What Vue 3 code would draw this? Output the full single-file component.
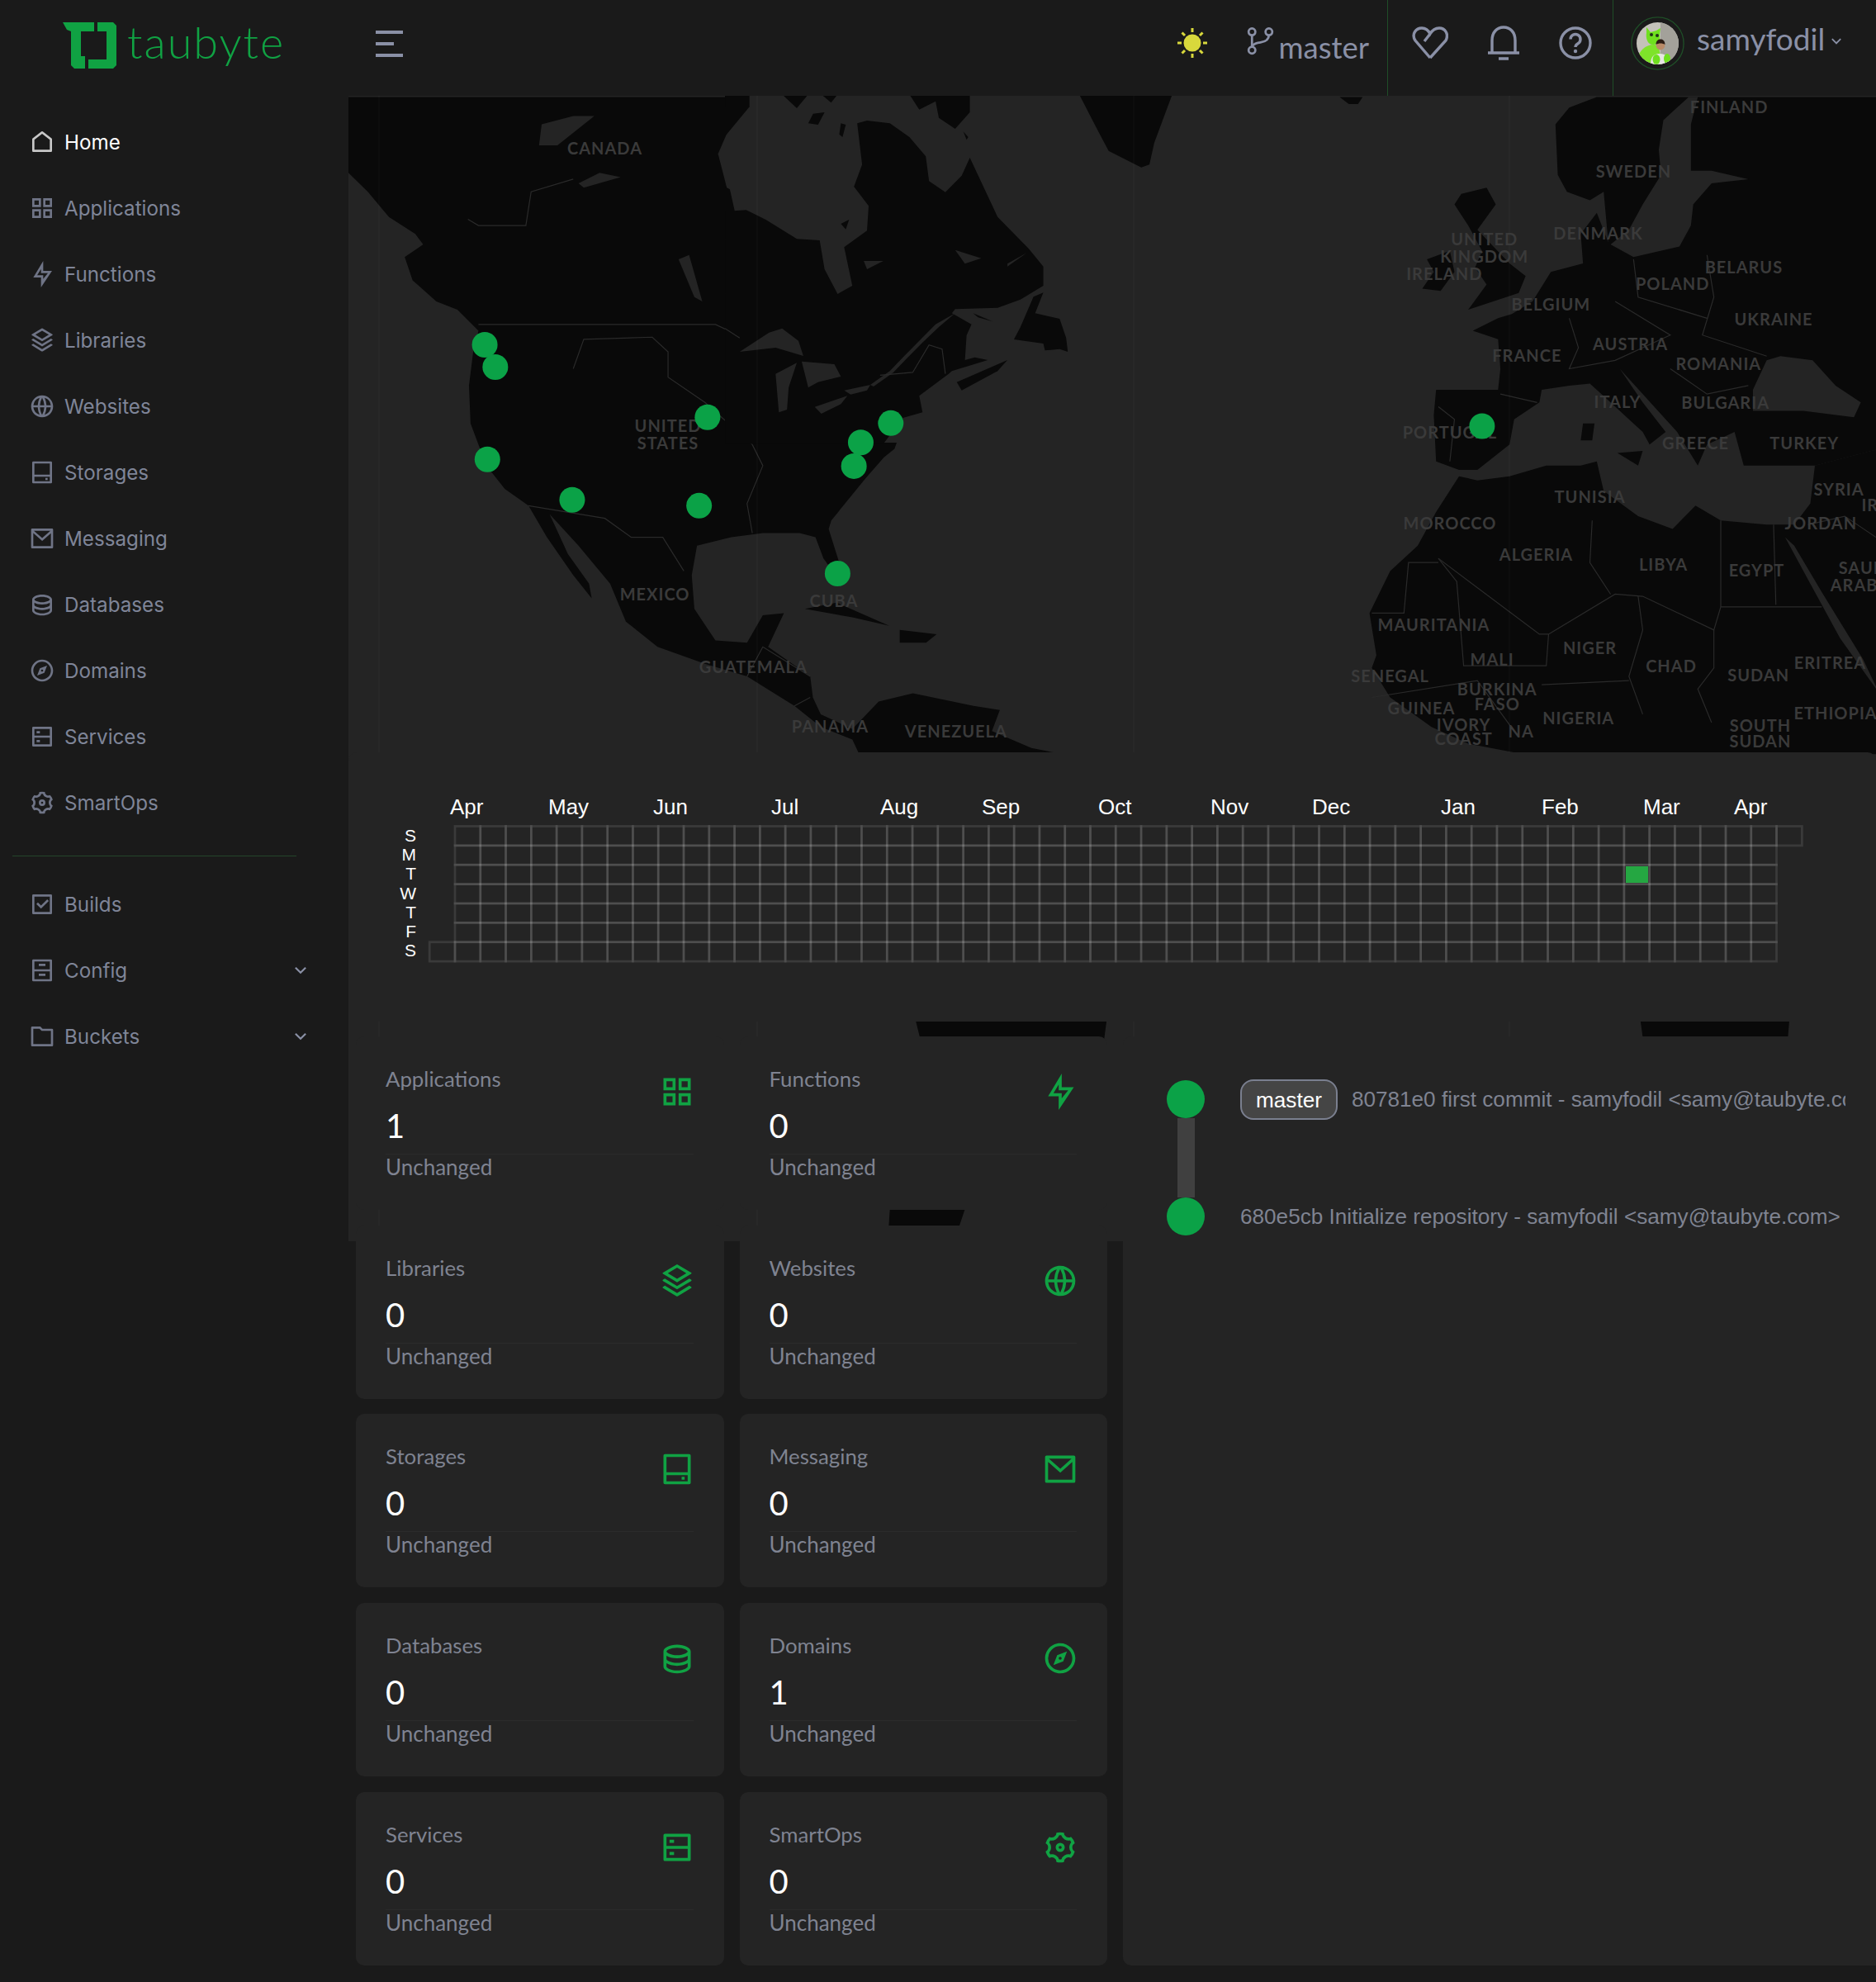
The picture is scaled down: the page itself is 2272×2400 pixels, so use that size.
<template>
  <div class="app">
    <header class="topbar">
      <div class="brand">
        <svg class="logo" viewBox="0 0 65 56" width="65" height="56">
          <path d="M0 0H38V11H22V41H27V56H14L10 52V11L5 9Z" fill="#10a243" />
          <path d="M42 0H61L65 4V52L61 56H31V45H53V11H42Z" fill="#10a243" />
        </svg>
        <span class="brand-name">taubyte</span>
      </div>
      <button class="burger"><i></i><i class="short"></i><i></i></button>

      <div class="top-right">
        <div class="top-group first">
          <svg class="sun" viewBox="0 0 40 40" width="40" height="40">
            <circle cx="20" cy="20" r="10.5" fill="#d8d83c" />
            <g stroke="#d8d83c" stroke-width="3">
              <path d="M20 2v5M20 33v5M2 20h5M33 20h5M7.5 7.5l3.5 3.5M29 29l3.5 3.5M7.5 32.5L11 29M29 11l3.5-3.5" />
            </g>
          </svg>
          <svg class="branch" viewBox="0 0 24 24" width="41" height="41">
            <g fill="none" stroke="#8a90a6" stroke-width="1.6">
              <circle cx="6" cy="5" r="2.4" />
              <circle cx="18" cy="5" r="2.4" />
              <circle cx="6" cy="18" r="2.4" />
              <path d="M6 7.4v8.2M18 7.4c0 3.6-3 4.6-6 5.1s-5.4 1-6 3.1" />
            </g>
          </svg>
          <span class="branch-name">master</span>
        </div>
        <div class="top-group icons">
          <svg viewBox="0 0 44 40" width="44" height="40">
            <path d="M22 38L4 17C-1 9 5 2 12 2c5 0 8 3 10 7 3-5 7-7 11-7 7 0 12 7 8 15L22 38M22 9l-7 9" fill="none" stroke="#8a90a6" stroke-width="3.4" />
          </svg>
          <svg viewBox="0 0 40 42" width="40" height="42">
            <path d="M6 33V18C6 8 12 2 20 2s14 6 14 16v15M1 33h38M14 40h12" fill="none" stroke="#8a90a6" stroke-width="3.4" />
          </svg>
          <svg viewBox="0 0 40 40" width="40" height="40">
            <circle cx="20" cy="20" r="18" fill="none" stroke="#8a90a6" stroke-width="3.4" />
            <path d="M14 15.5a6 6 0 1 1 9 5.2c-2 1.2-3 2.2-3 4.4" fill="none" stroke="#8a90a6" stroke-width="3.4" />
            <circle cx="20" cy="30" r="2.2" fill="#8a90a6" />
          </svg>
        </div>
        <div class="top-group user">
          <svg class="avatar" viewBox="0 0 65 65" width="65" height="65">
            <defs>
              <clipPath id="avatar-clip"><circle cx="32.5" cy="32.5" r="25.5" /></clipPath>
            </defs>
            <circle cx="32.5" cy="32.5" r="31.6" fill="none" stroke="#1f4d27" stroke-width="1.4" />
            <g clip-path="url(#avatar-clip)">
              <rect width="65" height="65" fill="#c4c2ba" />
              <rect x="36" width="29" height="65" fill="#a3a19a" />
              <path d="M19 13l5 6 7-2 5-3-1 8c1 6-1 12-8 12s-9-8-8-14z" fill="#6fe01f" />
              <circle cx="25" cy="22" r="2" fill="#20301a" />
              <circle cx="32" cy="23" r="2" fill="#20301a" />
              <path d="M6 58c2-14 10-24 22-24 6 0 8 6 8 24z" fill="#7ee32a" />
              <path d="M24 58c0-8 3-13 11-13s13 5 13 13z" fill="#e6e6e2" />
              <circle cx="36" cy="35" r="5.4" fill="#b98a68" />
              <path d="M30.500 34c0-5 3-6.500 5.500-6.500s5.500 1.500 5.500 6.500c-3-2-8-2-11 0z" fill="#2b1c14" />
              <ellipse cx="31" cy="52" rx="4.500" ry="6" fill="#6fe01f" />
              <ellipse cx="44" cy="51" rx="4" ry="6" fill="#6fe01f" />
            </g>
          </svg>
          <span class="user-name">samyfodil</span>
          <svg class="user-chev" viewBox="0 0 24 24" width="22" height="22"><path :d="chevron" /></svg>
        </div>
      </div>
    </header>

    <div class="layout">
      <nav class="sidebar">
        <a v-for="item in menu" :key="item.label" class="side-item" :class="{ active: item.label === 'Home' }">
          <svg viewBox="0 0 24 24" width="32" height="32"><path :d="icons[item.icon]" fill-rule="evenodd" /></svg>
          <span>{{ item.label }}</span>
        </a>
        <div class="side-rule"></div>
        <a v-for="item in lowerMenu" :key="item.label" class="side-item">
          <svg viewBox="0 0 24 24" width="32" height="32"><path :d="icons[item.icon]" fill-rule="evenodd" /></svg>
          <span>{{ item.label }}</span>
          <svg v-if="item.more" class="side-chev" viewBox="0 0 24 24" width="26" height="26"><path :d="chevron" /></svg>
        </a>
      </nav>

      <main class="main">
        <!-- map sits behind everything, cards and chart are laid over it -->
        <svg class="map" viewBox="422 116 1850 1387" width="1850" height="1387">
          <g transform="translate(420 120) scale(0.6378 0.5102)" fill="#090909">
            <path d="M-5 -5L1250 -5L1190 130L1270 310L1325 410L1320 440L1200 500L1110 565L1120 590L1180 590L1250 610L1180 680L1150 680L1090 710L1060 760L1040 830L1020 850L985 900L920 1000L915 1020L935 1100L925 1125L905 1090L890 1040L860 1030L790 1030L730 1040L665 1060L655 1130L660 1210L700 1285L760 1290L790 1225L830 1220L800 1300L880 1370L885 1420L900 1460L960 1495L1010 1430L1075 1410L1190 1440L1240 1450L1225 1500L1300 1540L1360 1555L975 1560L960 1520L900 1490L850 1440L760 1370L680 1340L590 1300L530 1240L500 1150L440 1060L385 985L420 1080L460 1150L465 1185L430 1130L380 1040L345 965L300 925L265 870L235 770L232 680L240 600L250 550L210 500L170 480L125 430L110 375L145 345L130 320L80 280L40 220L-5 165Z" />
            <path d="M870 1210L930 1195L1030 1250L960 1230Z" />
            <path d="M1050 1260L1120 1270L1100 1290L1050 1290Z" />
            <g fill="#242424">
              <path d="M721 84L705 130L721 208L735 84Z" />
              <path d="M630 380L650 370L675 480L660 470Z" />
              <path d="M370 60L430 40L470 40L400 110L365 110Z" />
              <path d="M440 200L480 175L520 185L450 210Z" />
            </g>
            <g fill="none" stroke="#2a2a2a" stroke-width="1.2">
              <path vector-effect="non-scaling-stroke" d="M250 535L700 535L760 570" />
              <path vector-effect="non-scaling-stroke" d="M345 965L490 995L540 1040L600 1040L640 1120" />
              <path vector-effect="non-scaling-stroke" d="M230 285L250 300L340 300L350 220L430 190" />
              <path vector-effect="non-scaling-stroke" d="M430 640L450 570L580 565L610 600L610 660L680 720L770 820L790 870L760 960L770 1030" />
              <path vector-effect="non-scaling-stroke" d="M760 1370L790 1300L880 1370M850 1440L880 1420" />
            </g>
          </g>

          <!-- north east of America is redrawn on its own, it is too detailed for the coarse outline -->
          <rect x="880" y="116" width="620" height="420" fill="#242424" />
          <g transform="translate(880 116) scale(0.3954 0.3333)" fill="#090909">
            <path d="M-5 420L60 415L120 450L215 520L285 525L300 630L340 720L385 690L360 550L430 490L435 400L390 330L415 250L400 100L430 90L500 100L560 150L610 220L620 310L670 350L720 290L745 225L830 440L925 555L970 620L970 690L900 740L830 770L700 775L690 790L750 830L735 870L730 960L760 950L800 960L690 1000L680 1010L590 1090L600 1150L540 1170L480 1265L-5 1265Z" />
            <path d="M-5 -5L70 -5L70 40L0 140L-5 140Z" />
            <path d="M-5 330L10 340L25 420L-5 420Z" />
            <path d="M170 -5L250 -5L215 45Z" />
            <path d="M290 -5L340 -5L320 25Z" />
            <path d="M250 100L265 65L300 60L280 105Z" />
            <path d="M345 140L350 100L365 105L355 150Z" />
            <path d="M560 -5L745 -5L745 60L700 120L650 80L640 20L590 50Z" />
            <path d="M725 130L740 150L735 160Z" />
            <path d="M1080 -5L1365 -5L1310 170L1295 250L1270 260L1170 200L1130 110Z" />
            <path d="M880 885L900 840L940 730L970 715L945 790L1020 810L1040 880L1045 930L1020 920L975 925L970 900Z" />
            <path d="M705 1040L860 960L830 1000L720 1070Z" />
            <g fill="#242424">
              <path d="M40 930L130 860L170 845L220 890L235 945L150 915Z" />
              <path d="M150 1010L215 970L190 1060L185 1140L160 1150Z" />
              <path d="M230 965L330 975L350 1020L280 1040L250 1060Z" />
              <path d="M270 1130L370 1090L350 1120L290 1155Z" />
              <path d="M360 1070L440 1050L430 1070L380 1085Z" />
              <path d="M420 600L480 600L430 630Z" />
              <path d="M700 560L780 590L730 610Z" />
              <path d="M860 610L920 570L860 620Z" />
              <path d="M700 790L640 830L590 890L540 950L500 1000L440 1050L450 1056L510 1006L550 956L600 896L650 840Z" />
            </g>
            <path d="M755 790L815 820L770 805Z" />
            <path d="M350 465L375 450L365 485Z" />
            <g fill="none" stroke="#2a2a2a" stroke-width="1.2">
              <path vector-effect="non-scaling-stroke" d="M-5 845L40 880" />
              <path vector-effect="non-scaling-stroke" d="M470 1015L570 1005L620 905L660 920L670 1010" />
            </g>
          </g>

          <g transform="translate(1400 120) scale(0.5561 0.5102)" fill="#090909">
            <path d="M870 60L900 20L960 -5L1575 -5L1575 830L1435 870L1280 870L1260 790L1240 800L1200 820L1180 870L1135 790L1010 640L1060 720L1110 790L1075 820L1060 790L990 720L945 675L900 680L840 690L835 720L780 760L770 820L700 880L660 880L610 860L605 750L610 690L745 690L750 640L745 570L690 550L745 520L775 510L820 480L860 410L930 390L925 320L960 270L985 340L975 220L945 240L895 220L875 180Z" />
            <path d="M660 895L700 905L770 895L850 870L925 870L960 860L975 930L1050 990L1125 1020L1175 965L1230 1000L1330 1010L1390 1010L1425 960L1435 870L1575 830L1575 1555L800 1555L680 1530L600 1490L510 1420L470 1350L480 1320L465 1220L510 1120L570 1060L610 980Z" />
            <path d="M650 250L665 225L720 210L740 250L700 310L770 390L805 420L790 460L680 500L720 440L695 400L710 360L680 300Z" />
            <path d="M590 380L640 360L650 410L620 455L580 450L605 410Z" />
            <path d="M930 770L955 770L950 810L925 810Z" />
            <path d="M1005 840L1060 835L1050 870Z" />
            <path d="M400 -5L450 -5L440 12L420 12Z" />
            <g fill="#242424">
              <path d="M1160 -5L1105 50L1095 120L1100 180L1060 250L1030 310L990 345L1040 375L1140 350L1165 300L1170 250L1210 200L1290 190L1210 170L1165 170L1165 60L1180 -5Z" />
              <path d="M1300 690L1330 620L1360 610L1430 620L1480 680L1535 720L1520 755L1410 740L1300 740Z" />
              <path d="M1370 1040L1420 1140L1490 1280L1575 1410L1540 1330L1450 1170L1390 1060Z" />
            </g>
            <g fill="none" stroke="#2a2a2a" stroke-width="1.2">
              <path vector-effect="non-scaling-stroke" d="M615 1090L835 1270L855 1270L1000 1175L1060 1180L1215 1260L1230 1205L1450 1205" />
              <path vector-effect="non-scaling-stroke" d="M1230 1000L1230 1205M950 1000L945 1100L990 1175" />
              <path vector-effect="non-scaling-stroke" d="M855 1270L850 1345L670 1345L655 1145L615 1090M470 1220L540 1220L550 1100L615 1100" />
              <path vector-effect="non-scaling-stroke" d="M1215 1260L1215 1350L1180 1400L1210 1480M1050 1180L1060 1260L1030 1370L1060 1460" />
              <path vector-effect="non-scaling-stroke" d="M1040 380L1050 470L1200 520M1200 370L1215 470L1190 560L1330 610" />
              <path vector-effect="non-scaling-stroke" d="M900 520L920 590L900 640L1000 620L1120 560L1000 480M750 700L830 720M615 730L650 760L640 860" />
              <path vector-effect="non-scaling-stroke" d="M1120 640L1200 700L1290 680M840 1390L1030 1380M470 1420L700 1380L780 1500" />
              <path vector-effect="non-scaling-stroke" d="M1345 1010L1350 1200M1420 1010L1500 990L1568 1040" />
            </g>
          </g>

          <path d="M1100 1200L1345 1200L1337 1260L1115 1260Z" fill="#090909" />
          <path d="M1982 1200L2170 1200L2165 1260L1990 1260Z" fill="#090909" />
          <path d="M1078 1460L1170 1460L1160 1490L1076 1490Z" fill="#090909" />

          <line v-for="x in seams" :key="x" :x1="x" :x2="x" y1="116" y2="1503" stroke="#fff" stroke-opacity="0.04" />

          <text v-for="l in labels" :key="l.t + l.x" :x="l.x" :y="l.y" class="map-label">{{ l.t }}</text>
          <circle v-for="p in pins" :key="p.x" :cx="p.x" :cy="p.y" r="15.5" fill="#0ba247" />
        </svg>

        <div class="content">
          <section class="chart">
            <svg viewBox="422 911 1850 326" width="1850" height="326">
              <text v-for="m in months" :key="m.t + m.x" :x="m.x" y="986" class="chart-text">{{ m.t }}</text>
              <text v-for="d in days" :key="d.y" x="504" :y="d.y" class="chart-day">{{ d.t }}</text>
              <rect v-for="c in cells" :key="c.k" :x="c.x" :y="c.y" width="30.78" height="23.37" fill="none" stroke="#fff" stroke-opacity="0.1" stroke-width="2.8" />
              <rect x="1969" y="1049" width="27" height="20" fill="#25a742" />
            </svg>
          </section>

          <section class="lower">
            <div class="stats">
              <div v-for="s in stats" :key="s.title" class="stat">
                <div class="stat-top">
                  <div>
                    <div class="stat-title">{{ s.title }}</div>
                    <div class="stat-value">{{ s.value }}</div>
                  </div>
                  <svg viewBox="0 0 24 24" width="44" height="44"><path :d="icons[s.icon]" fill-rule="evenodd" /></svg>
                </div>
                <div class="stat-note">Unchanged</div>
              </div>
            </div>

            <div class="commits">
              <div class="commit">
                <span class="dot"></span>
                <span class="tag">master</span>
                <span class="commit-text">80781e0 first commit - samyfodil &lt;samy@taubyte.com&gt;</span>
              </div>
              <div class="link"></div>
              <div class="commit">
                <span class="dot"></span>
                <span class="commit-text">680e5cb Initialize repository - samyfodil &lt;samy@taubyte.com&gt;</span>
              </div>
            </div>
          </section>
        </div>
      </main>
    </div>
  </div>
</template>

<script setup>
const chevron = "M12 13.172l4.95-4.95 1.414 1.414L12 16 5.636 9.636 7.05 8.222z";

const icons = {
  home: "M21 20a1 1 0 0 1-1 1H4a1 1 0 0 1-1-1V9.49a1 1 0 0 1 .386-.79l8-6.222a1 1 0 0 1 1.228 0l8 6.222a1 1 0 0 1 .386.79V20zm-2-1V9.978l-7-5.444-7 5.444V19h14z",
  apps: "M3 3h8v8H3V3zm0 10h8v8H3v-8zM13 3h8v8h-8V3zm0 10h8v8h-8v-8zm2-8v4h4V5h-4zm0 10v4h4v-4h-4zM5 5v4h4V5H5zm0 10v4h4v-4H5z",
  bolt: "M13 9h8L11 24v-9H4l9-15v9zm-2 2V7.237L7.532 13H13v3.394L17.263 11H11z",
  stack:
    "M20.083 15.2l1.202.721a.5.5 0 0 1 0 .858l-8.77 5.262a1 1 0 0 1-1.03 0l-8.77-5.262a.5.5 0 0 1 0-.858l1.202-.721L12 20.05l8.083-4.85zm0-4.7l1.202.721a.5.5 0 0 1 0 .858L12 17.65l-9.285-5.571a.5.5 0 0 1 0-.858l1.202-.721L12 15.35l8.083-4.85zm-7.569-9.191l8.771 5.262a.5.5 0 0 1 0 .858L12 13 2.715 7.429a.5.5 0 0 1 0-.858l8.77-5.262a1 1 0 0 1 1.03 0zM12 3.332L5.887 7 12 10.668 18.113 7 12 3.332z",
  globe:
    "M12 22C6.477 22 2 17.523 2 12S6.477 2 12 2s10 4.477 10 10-4.477 10-10 10zm-2.29-2.333A17.9 17.9 0 0 1 8.027 13H4.062a8.008 8.008 0 0 0 5.648 6.667zM10.03 13c.151 2.439.848 4.73 1.97 6.752A15.905 15.905 0 0 0 13.97 13h-3.94zm9.908 0h-3.965a17.9 17.9 0 0 1-1.683 6.667A8.008 8.008 0 0 0 19.938 13zM4.062 11h3.965A17.9 17.9 0 0 1 9.71 4.333 8.008 8.008 0 0 0 4.062 11zm5.969 0h3.938A15.905 15.905 0 0 0 12 4.248 15.905 15.905 0 0 0 10.03 11zm4.259-6.667A17.9 17.9 0 0 1 15.973 11h3.965a8.008 8.008 0 0 0-5.648-6.667z",
  drive: "M5 14h14V4H5v10zm0 2v4h14v-4H5zM4 2h16a1 1 0 0 1 1 1v18a1 1 0 0 1-1 1H4a1 1 0 0 1-1-1V3a1 1 0 0 1 1-1zm11 15h2v2h-2v-2z",
  mail: "M3 3h18a1 1 0 0 1 1 1v16a1 1 0 0 1-1 1H3a1 1 0 0 1-1-1V4a1 1 0 0 1 1-1zm17 4.238l-7.928 7.1L4 7.216V19h16V7.238zM4.511 5l7.55 6.662L19.502 5H4.511z",
  database:
    "M5 12.5c0 .313.461.858 1.53 1.393C7.914 14.585 9.877 15 12 15c2.123 0 4.086-.415 5.47-1.107 1.069-.535 1.53-1.08 1.53-1.393v-2.171C17.35 11.349 14.827 12 12 12s-5.35-.652-7-1.671V12.5zm14 2.829C17.35 16.349 14.827 17 12 17s-5.35-.652-7-1.671V17.5c0 .313.461.858 1.53 1.393C7.914 19.585 9.877 20 12 20c2.123 0 4.086-.415 5.47-1.107 1.069-.535 1.53-1.08 1.53-1.393v-2.171zM3 17.5v-10C3 5.015 7.03 3 12 3s9 2.015 9 4.5v10c0 2.485-4.03 4.5-9 4.5s-9-2.015-9-4.5zm9-7.5c2.123 0 4.086-.415 5.47-1.107C18.539 8.358 19 7.813 19 7.5c0-.313-.461-.858-1.53-1.393C16.086 5.415 14.123 5 12 5c-2.123 0-4.086.415-5.47 1.107C5.461 6.642 5 7.187 5 7.5c0 .313.461.858 1.53 1.393C7.914 9.585 9.877 10 12 10z",
  compass:
    "M12 22C6.477 22 2 17.523 2 12S6.477 2 12 2s10 4.477 10 10-4.477 10-10 10zm0-2a8 8 0 1 0 0-16 8 8 0 0 0 0 16zm4.5-12.5L14 14l-6.5 2.5L10 10l6.5-2.5zM12 13a1 1 0 1 0 0-2 1 1 0 0 0 0 2z",
  server: "M5 11h14V5H5v6zm16-7v16a1 1 0 0 1-1 1H4a1 1 0 0 1-1-1V4a1 1 0 0 1 1-1h16a1 1 0 0 1 1 1zm-2 9H5v6h14v-6zM7 15h3v2H7v-2zm0-8h3v2H7V7z",
  gear: "M3.34 17a10.018 10.018 0 0 1-.978-2.326 3 3 0 0 0 .002-5.347A9.99 9.99 0 0 1 4.865 4.99a3 3 0 0 0 4.631-2.674 9.99 9.99 0 0 1 5.007.002 3 3 0 0 0 4.632 2.672c.579.59 1.093 1.261 1.525 2.01.433.749.757 1.53.978 2.326a3 3 0 0 0-.002 5.347 9.99 9.99 0 0 1-2.501 4.337 3 3 0 0 0-4.631 2.674 9.99 9.99 0 0 1-5.007-.002 3 3 0 0 0-4.632-2.672A10.018 10.018 0 0 1 3.34 17zm5.66.196a4.993 4.993 0 0 1 2.25 2.77c.499.047 1 .048 1.499.001A4.993 4.993 0 0 1 15 17.197a4.993 4.993 0 0 1 3.525-.565c.29-.408.54-.843.748-1.298A4.993 4.993 0 0 1 18 12c0-1.26.47-2.437 1.273-3.334a8.126 8.126 0 0 0-.75-1.298A4.993 4.993 0 0 1 15 6.804a4.993 4.993 0 0 1-2.25-2.77c-.499-.047-1-.048-1.499-.001A4.993 4.993 0 0 1 9 6.803a4.993 4.993 0 0 1-3.525.565 7.99 7.99 0 0 0-.748 1.298A4.993 4.993 0 0 1 6 12c0 1.26-.47 2.437-1.273 3.334a8.126 8.126 0 0 0 .75 1.298A4.993 4.993 0 0 1 9 17.196zM12 15a3 3 0 1 1 0-6 3 3 0 0 1 0 6zm0-2a1 1 0 1 0 0-2 1 1 0 0 0 0 2z",
  check: "M4 3h16a1 1 0 0 1 1 1v16a1 1 0 0 1-1 1H4a1 1 0 0 1-1-1V4a1 1 0 0 1 1-1zm1 2v14h14V5H5zm6.003 11L6.76 11.757l1.414-1.414 2.829 2.829 5.656-5.657 1.415 1.414L11.003 16z",
  drawer: "M3 2.992C3 2.444 3.445 2 3.993 2h16.014a1 1 0 0 1 .993.992v18.016a.993.993 0 0 1-.993.992H3.993A1 1 0 0 1 3 21.008V2.992zM19 11V4H5v7h14zm0 2H5v7h14v-7zM9 6h6v2H9V6zm0 9h6v2H9v-2z",
  folder: "M4 5v14h16V7h-8.414l-2-2H4zm8.414 0H21a1 1 0 0 1 1 1v14a1 1 0 0 1-1 1H3a1 1 0 0 1-1-1V4a1 1 0 0 1 1-1h7.414l2 2z",
};

const menu = [
  { label: "Home", icon: "home" },
  { label: "Applications", icon: "apps" },
  { label: "Functions", icon: "bolt" },
  { label: "Libraries", icon: "stack" },
  { label: "Websites", icon: "globe" },
  { label: "Storages", icon: "drive" },
  { label: "Messaging", icon: "mail" },
  { label: "Databases", icon: "database" },
  { label: "Domains", icon: "compass" },
  { label: "Services", icon: "server" },
  { label: "SmartOps", icon: "gear" },
];

const lowerMenu = [
  { label: "Builds", icon: "check" },
  { label: "Config", icon: "drawer", more: true },
  { label: "Buckets", icon: "folder", more: true },
];

const stats = [
  { title: "Applications", value: 1, icon: "apps" },
  { title: "Functions", value: 0, icon: "bolt" },
  { title: "Libraries", value: 0, icon: "stack" },
  { title: "Websites", value: 0, icon: "globe" },
  { title: "Storages", value: 0, icon: "drive" },
  { title: "Messaging", value: 0, icon: "mail" },
  { title: "Databases", value: 0, icon: "database" },
  { title: "Domains", value: 1, icon: "compass" },
  { title: "Services", value: 0, icon: "server" },
  { title: "SmartOps", value: 0, icon: "gear" },
];

// map positions were read off the screenshot, so the two areas have their own scale
const west = (x, y) => ({ x: 420 + x / 1.568, y: 120 + y / 1.96 });
const east = (x, y) => ({ x: 1400 + x / 1.798, y: 120 + y / 1.96 });

const seams = [459, 917, 1373, 1828];

const pins = [
  west(262, 583),
  west(282, 636),
  west(685, 755),
  west(1033, 769),
  west(976, 815),
  west(963, 871),
  west(267, 855),
  west(428, 951),
  west(669, 965),
  west(932, 1126),
  east(710, 776),
];

const westLabels = [
  ["CANADA", 490, 115],
  ["UNITED", 610, 775],
  ["STATES", 610, 815],
  ["MEXICO", 585, 1175],
  ["CUBA", 925, 1190],
  ["GUATEMALA", 772, 1347],
  ["PANAMA", 918, 1488],
  ["VENEZUELA", 1157, 1500],
];

const eastLabels = [
  ["FINLAND", 1248, 18],
  ["SWEDEN", 1040, 170],
  ["UNITED", 715, 332],
  ["KINGDOM", 715, 372],
  ["DENMARK", 963, 317],
  ["IRELAND", 628, 413],
  ["BELARUS", 1280, 397],
  ["POLAND", 1125, 437],
  ["BELGIUM", 860, 487],
  ["UKRAINE", 1345, 522],
  ["AUSTRIA", 1033, 580],
  ["FRANCE", 808, 608],
  ["ROMANIA", 1225, 628],
  ["ITALY", 1005, 717],
  ["BULGARIA", 1240, 720],
  ["PORTUGAL", 640, 790],
  ["TURKEY", 1412, 815],
  ["GREECE", 1175, 815],
  ["SYRIA", 1487, 925],
  ["IR", 1555, 962],
  ["TUNISIA", 945, 943],
  ["JORDAN", 1448, 1006],
  ["MOROCCO", 640, 1006],
  ["ALGERIA", 828, 1079],
  ["LIBYA", 1105, 1104],
  ["EGYPT", 1308, 1118],
  ["SAUDI", 1545, 1112],
  ["ARABIA", 1540, 1152],
  ["MAURITANIA", 605, 1247],
  ["MALI", 732, 1328],
  ["NIGER", 945, 1301],
  ["CHAD", 1122, 1345],
  ["SUDAN", 1312, 1366],
  ["ERITREA", 1468, 1336],
  ["SENEGAL", 510, 1369],
  ["BURKINA", 743, 1400],
  ["FASO", 743, 1434],
  ["GUINEA", 578, 1445],
  ["IVORY", 670, 1484],
  ["COAST", 670, 1518],
  ["NIGERIA", 920, 1468],
  ["SOUTH", 1316, 1486],
  ["SUDAN", 1316, 1522],
  ["ETHIOPIA", 1480, 1457],
  ["NA", 795, 1500],
];

const labels = [
  ...westLabels.map(([t, x, y]) => ({ t, ...west(x, y) })),
  ...eastLabels.map(([t, x, y]) => ({ t, ...east(x, y) })),
];

const months = [
  { t: "Apr", x: 545 },
  { t: "May", x: 664 },
  { t: "Jun", x: 791 },
  { t: "Jul", x: 934 },
  { t: "Aug", x: 1066 },
  { t: "Sep", x: 1189 },
  { t: "Oct", x: 1330 },
  { t: "Nov", x: 1466 },
  { t: "Dec", x: 1589 },
  { t: "Jan", x: 1745 },
  { t: "Feb", x: 1867 },
  { t: "Mar", x: 1990 },
  { t: "Apr", x: 2100 },
];

const days = [
  { t: "S", y: 1019 },
  { t: "M", y: 1042 },
  { t: "T", y: 1065 },
  { t: "W", y: 1089 },
  { t: "T", y: 1112 },
  { t: "F", y: 1135 },
  { t: "S", y: 1158 },
];

const cells = [];
for (let col = 0; col < 52; col++) {
  for (let row = 0; row < 7; row++) {
    cells.push({ k: col + "-" + row, x: 551 + col * 30.78, y: 1000.5 + row * 23.37 });
  }
}
cells.push({ k: "first", x: 551 - 30.78, y: 1000.5 + 6 * 23.37 });
cells.push({ k: "last", x: 551 + 52 * 30.78, y: 1000.5 });
</script>

<style scoped>
.app {
  width: 2272px;
  min-height: 2400px;
  overflow: hidden;
  background: #1a1a1a;
  font-family: Inter, "Liberation Sans", sans-serif;
}

.topbar {
  display: flex;
  align-items: center;
  height: 116px;
  background: #1a1a1a;
}

.brand {
  display: flex;
  align-items: center;
  gap: 13px;
  width: 455px;
  margin-top: -6px;
  padding-left: 76px;
  box-sizing: border-box;
}

.brand-name {
  margin-top: -8px;
  font-family: Lato, sans-serif;
  font-weight: 300;
  font-size: 54px;
  letter-spacing: 2px;
  line-height: 56px;
  color: #10a243;
}

.burger {
  display: flex;
  flex-direction: column;
  gap: 10px;
  width: 33px;
  margin-top: -10px;
  padding: 0;
  background: none;
  border: none;
}

.burger i {
  display: block;
  height: 4px;
  background: #8a90a6;
}

.burger .short {
  width: 22px;
}

.top-right {
  display: flex;
  align-self: stretch;
  margin-left: auto;
  font-family: Lato, sans-serif;
  color: #8a90a6;
}

.top-group {
  display: flex;
  align-items: center;
  padding-bottom: 12px;
  border-left: 1px solid #1f4d27;
}

.top-group.first {
  border-left: none;
  padding-right: 22px;
}

.branch {
  margin-left: 42px;
  margin-right: 1px;
  margin-top: -4px;
}

.branch-name {
  font-size: 36.5px;
  margin-top: 9px;
}

.top-group.icons {
  gap: 47px;
  padding-left: 29px;
  padding-right: 25px;
}

.top-group.user {
  padding-left: 21px;
  width: 319px;
  box-sizing: border-box;
}

.user-name {
  margin-left: 15px;
  font-size: 37px;
  margin-top: -11px;
}

.user-chev {
  margin-left: 3px;
  margin-top: -4px;
  fill: #8a90a6;
}

.layout {
  display: flex;
}

.sidebar {
  flex: 0 0 422px;
  padding-top: 16px;
  box-sizing: border-box;
}

.side-item {
  display: flex;
  align-items: center;
  gap: 11px;
  height: 80px;
  padding-left: 35px;
  font-size: 24.2px;
  color: #7f8598;
  fill: #6f7486;
}

.side-item.active {
  color: #fff;
  fill: #c8c8c8;
}

.side-chev {
  margin-left: auto;
  margin-right: 45px;
  fill: #8a90a6;
}

.side-rule {
  width: 344px;
  height: 1px;
  margin: 24px 0 18px 15px;
  background: #24452a;
}

.main {
  position: relative;
  flex: 1;
  min-width: 0;
}

.map {
  position: absolute;
  top: 0;
  left: 0;
  display: block;
  background: #242424;
}

.map-label {
  font-family: Lato, sans-serif;
  font-size: 20px;
  font-weight: 700;
  letter-spacing: 1px;
  text-anchor: middle;
  dominant-baseline: central;
  fill: #3a3a3a;
}

.content {
  position: relative;
  padding-top: 795px;
}

.chart {
  height: 326px;
  background: #242424;
  border-radius: 10px 10px 0 0;
}

.chart svg {
  display: block;
}

.chart-text {
  font-family: "Liberation Sans", sans-serif;
  font-size: 26px;
  fill: #fff;
}

.chart-day {
  font-family: "Liberation Sans", sans-serif;
  font-size: 21px;
  fill: #fff;
  text-anchor: end;
}

.lower {
  display: flex;
  gap: 19px;
  margin-top: 18px;
  padding-left: 9px;
}

.stats {
  display: grid;
  grid-template-columns: 445.5px 445.5px;
  grid-auto-rows: 210px;
  gap: 18.7px 19px;
}

.stat {
  padding: 33px 37px 0 36px;
  background: #242424;
  border-radius: 10px;
  box-sizing: border-box;
  font-family: Lato, sans-serif;
  color: #7f8391;
}

.stat-top {
  display: flex;
  justify-content: space-between;
  height: 109px;
  border-bottom: 1px solid #2b2b2b;
}

.stat-top svg {
  margin-top: 12px;
  margin-right: -2px;
  fill: #10a243;
}

.stat-title {
  font-size: 25.8px;
  line-height: 36px;
}

.stat-value {
  margin-top: 13px;
  font-size: 40px;
  line-height: 52px;
  color: #fff;
}

.stat-note {
  font-size: 26px;
  line-height: 30px;
}

.commits {
  flex: 1;
  min-width: 0;
  padding: 53px 37px 0 53px;
  background: #242424;
  border-radius: 10px 0 0 10px;
}

.commit {
  display: flex;
  align-items: center;
  height: 46px;
  font-family: "Liberation Sans", sans-serif;
  font-size: 26.15px;
  color: #7f8391;
}

.dot {
  flex: 0 0 46px;
  height: 46px;
  margin-right: 43px;
  border-radius: 50%;
  background: #0ba247;
}

.tag {
  flex: none;
  height: 49px;
  margin-right: 17px;
  padding: 0 17px;
  line-height: 47px;
  box-sizing: border-box;
  border: 2px solid #7a7f8f;
  border-radius: 16px;
  background: #454545;
  color: #fff;
}

.commit-text {
  min-width: 0;
  overflow: hidden;
  white-space: nowrap;
}

.link {
  width: 21px;
  height: 96px;
  margin-left: 13px;
  background: #404040;
}
</style>

<style>
html,
body {
  background: #1a1a1a;
}
</style>
